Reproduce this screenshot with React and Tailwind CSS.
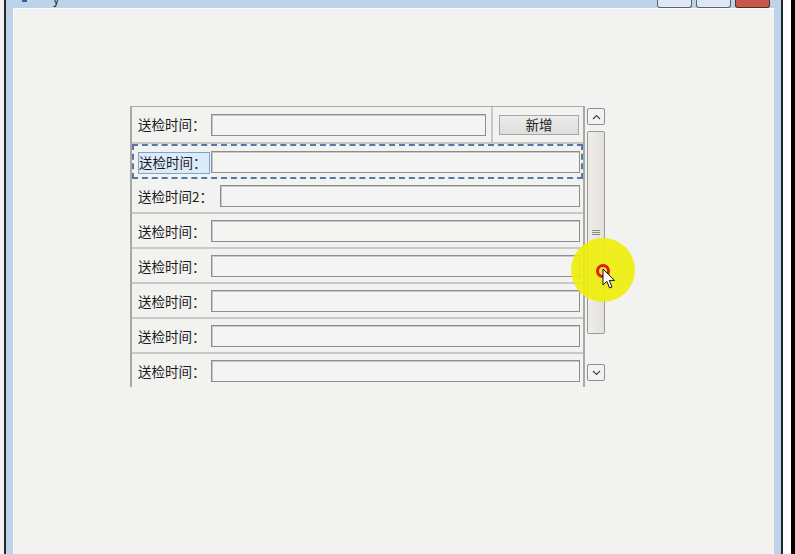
import React from "react";

const font = "font-['Noto_Sans_CJK_SC','Noto_Sans',sans-serif]";

const Field = ({ label, labelWidth = "w-[73px]", focused = false }) => (
  <div
    className={
      focused
        ? "flex h-[35px] items-center border-2 border-dashed border-[#5878a3] pl-[4px] pr-[1px]"
        : "flex h-[35px] items-center border-b-2 border-[#c9c9c7] pl-[6px] pr-[3px]"
    }
  >
    <div className={`${labelWidth} shrink-0`}>
      <span
        className={`inline-flex h-[22px] items-center text-[13.5px] leading-none text-[#1b1b1b] ${
          focused ? "border border-[#7fa3cf] bg-[#dcebfb] pr-[2px]" : ""
        }`}
      >
        {label}
      </span>
    </div>
    <div className="h-[22px] flex-1 border border-[#8d8d8d] bg-[#f4f4f3] shadow-[inset_1px_1px_0_#c8c8c8]" />
  </div>
);

const ScrollBtn = ({ down }) => (
  <div className="flex h-[17px] w-[18px] items-center justify-center rounded-[2px] border border-[#8f8f8f] bg-[#f3f3f3]">
    <svg width="9" height="6" viewBox="0 0 9 6" className={down ? "rotate-180" : ""}>
      <path d="M1 5 L4.5 1.5 L8 5" fill="none" stroke="#444" strokeWidth="1.2" />
    </svg>
  </div>
);

const App = () => {
  return (
    <div className={`relative flex h-[554px] w-[795px] overflow-hidden bg-white ${font}`}>
      <div className="w-[4px] bg-[#f1f1f1]" />
      <div className="flex w-[779px] flex-col border-l-2 border-r-2 border-[#262626]">
        {/* title bar */}
        <div className="relative flex h-[8px] items-end bg-[#bcd3ea]">
          <div className="ml-[16px] mb-[6px] h-[2px] w-[5px] bg-[#2f5fa6]" />
          <div className="ml-[26px] h-[8px] overflow-hidden">
            <span className="-mt-[8px] block text-[12px] leading-[14px] text-[#1e1e1e]">y</span>
          </div>
          <div className="ml-auto mr-[11px] flex h-[8px] gap-[4px]">
            <div className="h-[8px] w-[35px] rounded-b-[3px] border border-t-0 border-[#53657a] bg-[#dfe8f2]" />
            <div className="h-[8px] w-[35px] rounded-b-[3px] border border-t-0 border-[#53657a] bg-[#dfe8f2]" />
            <div className="h-[8px] w-[35px] rounded-b-[3px] border border-t-0 border-[#5a2a24] bg-[#c9584b]" />
          </div>
        </div>
        <div className="flex flex-1">
          <div className="w-[7px] bg-[#bed3ea]" />
          <div className="flex-1 border-l border-t border-[#fbfbfb] bg-[#f2f2f0] pl-[116px] pt-[97px]">
            <div className="flex">
              {/* list */}
              <div className="h-[281px] w-[455px] overflow-hidden border-l-2 border-r-2 border-t border-[#a9a9a7]">
                <div className="flex h-[37px] items-center border-b-2 border-[#c9c9c7] pl-[6px]">
                  <div className="w-[73px] shrink-0 text-[13.5px] leading-none text-[#1b1b1b]">送检时间：</div>
                  <div className="h-[22px] w-[275px] border border-[#8d8d8d] bg-[#f4f4f3] shadow-[inset_1px_1px_0_#c8c8c8]" />
                  <div className="ml-[5px] h-full border-l-2 border-[#c9c9c7]" />
                  <div className="ml-[6px] flex h-[20px] w-[80px] items-center justify-center border border-[#a6a6a6] bg-gradient-to-b from-[#ececea] to-[#dededc] text-[13.5px] leading-none text-[#1b1b1b]">
                    新增
                  </div>
                </div>
                <Field label="送检时间：" focused labelWidth="w-[73px]" />
                <Field label="送检时间2：" labelWidth="w-[82px]" />
                <Field label="送检时间：" />
                <Field label="送检时间：" />
                <Field label="送检时间：" />
                <Field label="送检时间：" />
                <Field label="送检时间：" />
              </div>
              {/* scrollbar */}
              <div className="ml-[2px] flex h-[281px] w-[19px] flex-col items-start pt-[2px]">
                <ScrollBtn />
                <div className="mt-[6px] flex h-[203px] w-[18px] items-center justify-center rounded-[2px] border border-[#9a9a9a] bg-gradient-to-r from-[#efedea] to-[#e4e1dc]">
                  <svg width="8" height="6" viewBox="0 0 8 6">
                    <path d="M0 0.5 H8 M0 2.5 H8 M0 4.5 H8" stroke="#8a8a8a" strokeWidth="1" />
                  </svg>
                </div>
                <div className="mt-[30px]">
                  <ScrollBtn down />
                </div>
              </div>
            </div>
          </div>
          <div className="w-[7px] border-r border-[#9fdcf5] bg-[#bed3ea]" />
        </div>
      </div>
      <div className="w-[8px] bg-white" />
      <div className="w-[4px] bg-black" />

      {/* mouse highlight */}
      <div className="absolute left-[571px] top-[238px] h-[64px] w-[64px] rounded-full bg-[#eeee08]/90" />
      <div className="absolute left-[596px] top-[264px] h-[14px] w-[14px] rounded-full border-[3px] border-[#e3161a]" />
      <svg className="absolute left-[602px] top-[268px]" width="14" height="22" viewBox="0 0 14 22">
        <path d="M1 1 L1 17 L4.8 13.3 L7.6 20 L10 19 L7.3 12.4 L12.5 12.4 Z" fill="#fff" stroke="#111" strokeWidth="1" strokeLinejoin="round" />
      </svg>
    </div>
  );
};

export default App;
